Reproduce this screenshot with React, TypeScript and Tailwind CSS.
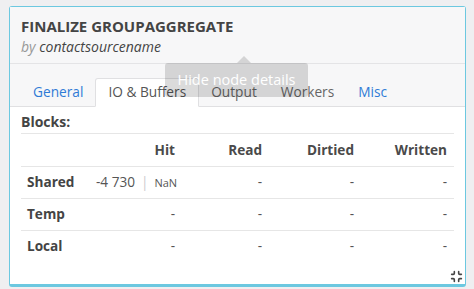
import { Minimize } from "lucide-react"

const rows = [
  { label: "Shared", hit: "-4 730", nan: true },
  { label: "Temp", hit: "-", nan: false },
  { label: "Local", hit: "-", nan: false },
]

const tabs = ["General", "IO & Buffers", "Output", "Workers", "Misc"]

export default function App() {
  return (
    <div className="w-[474px] h-[289px] bg-[#efeff1] pt-[6px] pl-[9px] font-['Open_Sans',sans-serif] text-[#4a4a4a] overflow-hidden">
      <div className="relative w-[457px] h-[281px] bg-white border border-[#6cc8e0] border-b-[3px] rounded-[3px]">
        <div className="bg-[#f7f7f8] border-b border-[#e4e4e6] h-[57px] px-[11px] pt-[8px]">
          <div className="text-[15px] font-bold leading-[22px] text-[#444]">FINALIZE GROUPAGGREGATE</div>
          <div className="text-[14px] italic leading-[20px] text-[#444]">
            <span className="text-[#999]">by</span> contactsourcename
          </div>
        </div>
        <div className="bg-[#f7f7f8] h-[43px] pt-[14px] px-[11px] border-b border-[#e0e0e2] flex">
          {tabs.map((t) =>
            t === "IO & Buffers" ? (
              <div key={t} className="h-[29px] px-[12px] flex items-center bg-white border border-[#e0e0e2] border-b-white rounded-t-[3px] text-[13.7px] text-[#555]">
                {t}
              </div>
            ) : (
              <div key={t} className={`h-[29px] px-[12px] flex items-center text-[13.7px] ${t === "General" || t === "Misc" ? "text-[#2f7bd6]" : "text-[#666]"}`}>
                {t}
              </div>
            )
          )}
        </div>
        <div className="px-[11px] pt-[4px]">
          <div className="text-[14px] font-bold leading-[22px] text-[#444] border-b border-[#e6e6e6]">Blocks:</div>
          <table className="w-[433px] table-fixed text-[13.6px] border-collapse">
            <thead>
              <tr className="h-[32px] border-b border-[#e6e6e6]">
                <th className="w-[75px]"></th>
                <th className="w-[86px] text-right font-bold pr-[7px]">Hit</th>
                <th className="w-[87px] text-right font-bold pr-[7px]">Read</th>
                <th className="w-[92px] text-right font-bold pr-[7px]">Dirtied</th>
                <th className="text-right font-bold pr-[7px]">Written</th>
              </tr>
            </thead>
            <tbody>
              {rows.map((r, i) => (
                <tr key={r.label} className={`h-[32px] ${i < 2 ? "border-b border-[#e6e6e6]" : ""}`}>
                  <td className="font-bold pl-[6px] text-[#444]">{r.label}</td>
                  {r.nan ? (
                    <td className="text-right whitespace-nowrap pr-[10px] text-[#555]">
                      {r.hit}
                      <span className="text-[#ccc] mx-[6px]">|</span>
                      <span className="text-[11px]">NaN</span>
                    </td>
                  ) : (
                    <td className="text-right pr-[7px] text-[#555]">-</td>
                  )}
                  <td className="text-right pr-[7px] text-[#555]">-</td>
                  <td className="text-right pr-[7px] text-[#555]">-</td>
                  <td className="text-right pr-[7px] text-[#555]">-</td>
                </tr>
              ))}
            </tbody>
          </table>
        </div>
        <div className="absolute right-[1px] bottom-[0px] w-[16px] h-[16px] bg-white flex items-center justify-center">
          <Minimize size={13} strokeWidth={3} className="text-[#444]" />
        </div>
        <div className="absolute left-[155px] top-[56px] w-[143px] h-[34px] bg-[rgba(0,0,0,0.14)] rounded-[3px] flex items-center justify-center text-[14.5px] text-white">
          <div className="absolute top-[-7px] left-[72px] w-0 h-0 border-l-[7px] border-r-[7px] border-b-[7px] border-l-transparent border-r-transparent border-b-[rgba(0,0,0,0.14)]"></div>
          Hide node details
        </div>
      </div>
    </div>
  )
}
